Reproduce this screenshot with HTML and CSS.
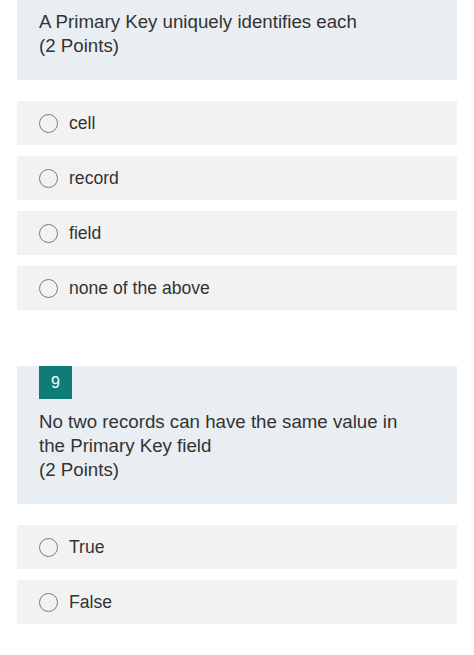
FILE: index.html
```html
<!doctype html>
<html lang="en">
  <head>
    <meta charset="UTF-8" />
    <meta name="viewport" content="width=device-width, initial-scale=1.0" />
    <title>Quiz</title>
    <link rel="stylesheet" href="styles.css">
  </head>
  <body>
    <div class="form">
      <div class="question">
        <div class="question-head">
          <p class="question-title">A Primary Key uniquely identifies each</p>
          <p class="question-points">(2 Points)</p>
        </div>
        <div class="choices">
          <label class="choice"><span class="radio"></span><span>cell</span></label>
          <label class="choice"><span class="radio"></span><span>record</span></label>
          <label class="choice"><span class="radio"></span><span>field</span></label>
          <label class="choice"><span class="radio"></span><span>none of the above</span></label>
        </div>
      </div>

      <div class="question second">
        <div class="question-head numbered">
          <div class="badge">9</div>
          <p class="question-title">No two records can have the same value in the Primary Key field</p>
          <p class="question-points">(2 Points)</p>
        </div>
        <div class="choices">
          <label class="choice"><span class="radio"></span><span>True</span></label>
          <label class="choice"><span class="radio"></span><span>False</span></label>
        </div>
      </div>
    </div>
  </body>
</html>
```

FILE: styles.css
```css
body {
  margin: 0;
  background-color: #fff;
  font-family: 'Liberation Sans', Arial, sans-serif;
  color: #333;
}
.form {
  padding: 0 17px;
}
.question-head {
  background-color: #e8eef2;
  padding: 10px 40px 22px 22px;
}
.question-head p {
  margin: 0;
  font-size: 18.7px;
  line-height: 24px;
  color: #333;
}
.question-head.numbered {
  padding-top: 0;
}
.badge {
  width: 33px;
  height: 33px;
  background-color: #107c7a;
  color: #fff;
  font-size: 16px;
  display: flex;
  align-items: center;
  justify-content: center;
  margin-bottom: 11px;
}
.choices {
  display: flex;
  flex-direction: column;
  gap: 11px;
  margin-top: 21px;
}
.choice {
  display: flex;
  align-items: center;
  height: 44px;
  padding-left: 22px;
  background-color: #f2f2f2;
  font-size: 17.6px;
  color: #333;
}
.radio {
  width: 17px;
  height: 17px;
  border: 1.5px solid #7a7a7a;
  border-radius: 50%;
  margin-right: 11px;
  flex-shrink: 0;
}
.question.second {
  margin-top: 56px;
}
```
